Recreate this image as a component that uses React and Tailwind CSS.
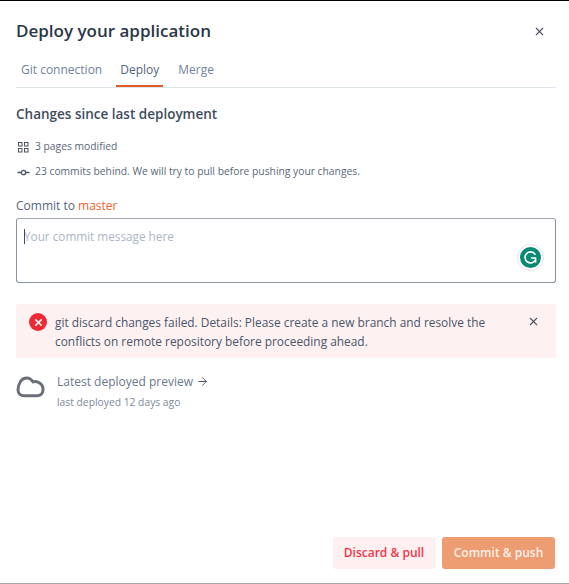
import React from "react";
import { X, ArrowRight } from "lucide-react";

const App = () => {
  return (
    <div className="w-[569px] h-[584px] flex flex-col bg-white border-t border-t-black border-b border-b-[#a9a9a9] pl-4 pr-[13px] font-['Open_Sans',sans-serif] overflow-hidden">
      {/* Header */}
      <div className="flex items-center justify-between h-[22px] mt-[19px]">
        <h1 className="text-[17px] font-semibold leading-[22px] text-[#2b3648]">
          Deploy your application
        </h1>
        <X size={13} strokeWidth={2} className="text-[#4b5563] mr-[10px]" />
      </div>

      {/* Tabs */}
      <div className="flex mt-[14px] h-[32px] border-b border-[#dfe5ec] text-[12px] text-[#71829a]">
        <div className="px-[5px] pt-[5px] mr-[9px]">Git connection</div>
        <div className="px-[4px] pt-[5px] mr-[15px] h-[31px] border-b-2 border-[#e15a24] text-[#56657a]">
          Deploy
        </div>
        <div className="pt-[5px]">Merge</div>
      </div>

      {/* Changes */}
      <h2 className="mt-[17px] text-[13.5px] font-semibold leading-[18px] text-[#3e4c5e]">
        Changes since last deployment
      </h2>
      <div className="flex items-center gap-[6px] mt-[16px] h-[16px] text-[10.3px] text-[#59677a]">
        <svg width="12" height="12" viewBox="0 0 12 12" fill="none" stroke="#4b5563" strokeWidth="1" className="ml-[1px]">
          <rect x="1.5" y="1.5" width="3.5" height="3.5" />
          <rect x="7.5" y="1.5" width="3.5" height="3.5" />
          <rect x="1.5" y="7.5" width="3.5" height="3.5" />
          <rect x="7.5" y="7.5" width="3.5" height="3.5" />
        </svg>
        <span>3 pages modified</span>
      </div>
      <div className="flex items-center gap-[6px] mt-[9px] h-[16px] text-[10.3px] text-[#59677a]">
        <svg width="13" height="9" viewBox="0 0 13 9" fill="none" stroke="#4b5563" strokeWidth="1.3" className="ml-[1px] mr-[-1px]">
          <circle cx="6.5" cy="4.5" r="2.2" />
          <path d="M0.5 4.5H4.3M8.7 4.5H12.5" />
        </svg>
        <span>23 commits behind. We will try to pull before pushing your changes.</span>
      </div>

      {/* Commit input */}
      <div className="mt-[17px] text-[12px] leading-[17px] text-[#56657a]">
        Commit to <span className="text-[#f0622c]">master</span>
      </div>
      <div className="relative mt-[4px] h-[65px] rounded-[3px] border border-[#8a93a0] border-t-[#a3a9b2] pl-[7px] pt-[9px] text-[11.75px] leading-[17px] text-[#aab6c6]">
        <span className="absolute left-[7px] top-[10px] w-px h-[15px] bg-[#3e4c5e]" />
        Your commit message here
        <div className="absolute right-[11px] bottom-[11px] w-[27px] h-[27px] rounded-full bg-white border border-[#e2e5ee] flex items-center justify-center">
          <svg width="21" height="21" viewBox="0 0 21 21" fill="none">
            <circle cx="10.5" cy="10.5" r="10.5" fill="#0b8a73" />
            <path d="M15 7.2A5.5 5.5 0 1 0 15.6 12.5M15.6 11H11.5M15.6 11V15" stroke="white" strokeWidth="1.6" strokeLinecap="round" />
          </svg>
        </div>
      </div>

      {/* Error */}
      <div className="flex items-start mt-[21px] h-[54px] rounded-[3px] bg-[#fef1f1] pl-[13px] pr-[16px] pt-[9px]">
        <div className="w-[18px] h-[18px] rounded-full bg-[#ee2a35] flex items-center justify-center shrink-0">
          <X size={11} strokeWidth={3.5} className="text-white" />
        </div>
        <p className="flex-1 ml-[8px] text-[11.9px] leading-[19px] text-[#4a566b]">
          git discard changes failed. Details: Please create a new branch and resolve the conflicts on remote repository before proceeding ahead.
        </p>
        <X size={13} strokeWidth={2} className="text-[#4b5563] shrink-0 mt-[2px] ml-[8px]" />
      </div>

      {/* Latest preview */}
      <div className="flex mt-[15px]">
        <svg width="29" height="22" viewBox="0 0 29 22" fill="none" className="mt-[3px]">
          <path d="M8 19.8C4.2 19.8 2 17 2 13.5C2 10.8 3 8 4.5 5.5C6 3 8.5 2 10.8 2C13.5 2 15.5 3.5 17 6C18.5 5.3 20.5 5.5 22 6.2C25 7.5 27 10 27 13.5C27 17.5 24.5 19.8 21 19.8Z" stroke="#6b7078" strokeWidth="3" strokeLinejoin="round" />
        </svg>
        <div className="ml-[12px]">
          <div className="flex items-center gap-[3px] text-[12px] leading-[17px] text-[#6a788c]">
            Latest deployed preview
            <ArrowRight size={13} strokeWidth={1.8} className="text-[#4b5563]" />
          </div>
          <div className="mt-[5px] text-[10.3px] leading-[15px] text-[#7d8a9c]">
            last deployed 12 days ago
          </div>
        </div>
      </div>

      {/* Footer */}
      <div className="flex justify-end gap-[7px] mt-auto mb-[14px] mr-px">
        <button className="h-[32px] w-[102px] rounded-[3px] bg-[#fef0f1] text-[12px] font-semibold text-[#f5374a]">
          Discard &amp; pull
        </button>
        <button className="h-[32px] w-[113px] rounded-[3px] bg-[#ee9c72] text-[12px] font-semibold text-[#fdf1ea]">
          Commit &amp; push
        </button>
      </div>
    </div>
  );
};

export default App;
